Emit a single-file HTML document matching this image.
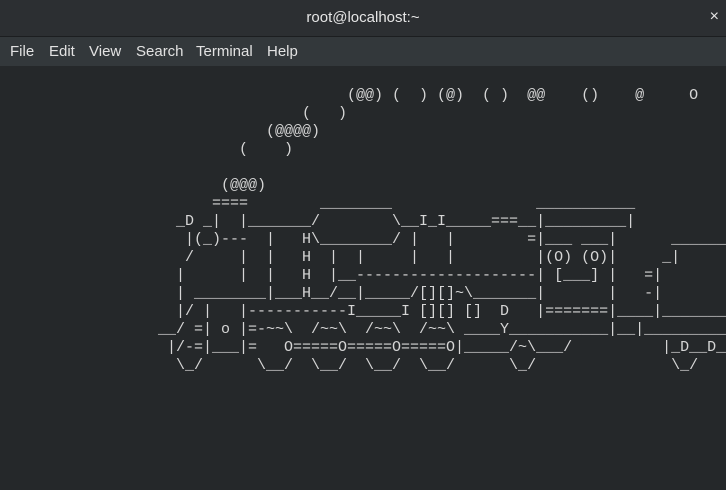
<!DOCTYPE html>
<html><head><meta charset="utf-8"><style>
html,body{margin:0;padding:0;width:726px;height:490px;overflow:hidden;background:#25282a;}
#title{position:absolute;left:0;top:0;width:726px;height:36px;background:#2c2f32;border-bottom:1px solid #1c1e20;color:#e6e6e6;font:15px "Liberation Sans",sans-serif;}
#title .t{position:absolute;left:0;right:0;top:9px;text-align:center;}
#title .x{position:absolute;right:7px;top:8px;font-size:16px;}
#menu{position:absolute;left:0;top:37px;width:726px;height:29px;background:#33383b;color:#e2e2e2;font:15px "Liberation Sans",sans-serif;}
#menu span{position:absolute;top:6px;}
pre{position:absolute;left:140px;top:87px;width:586px;overflow:hidden;margin:0;font:15px/18px "Liberation Mono","DejaVu Sans Mono",monospace;color:#d6d6d6;white-space:pre;letter-spacing:0;}
</style></head><body>
<div id="title"><div class="t">root@localhost:~</div><div class="x">×</div></div>
<div id="menu"><span style="left:10px">File</span><span style="left:49px">Edit</span><span style="left:89px">View</span><span style="left:136px">Search</span><span style="left:196px">Terminal</span><span style="left:267px">Help</span></div>
<pre>                       (@@) (  ) (@)  ( )  @@    ()    @     O
                  (   )
              (@@@@)
           (    )

         (@@@)
        ====        ________                ___________
    _D _|  |_______/        \__I_I_____===__|_________|
     |(_)---  |   H\________/ |   |        =|___ ___|      _________________
     /     |  |   H  |  |     |   |         |(O) (O)|     _|
    |      |  |   H  |__--------------------| [___] |   =|
    | ________|___H__/__|_____/[][]~\_______|       |   -|
    |/ |   |-----------I_____I [][] []  D   |=======|____|________________________|_
  __/ =| o |=-~~\  /~~\  /~~\  /~~\ ____Y___________|__|__________________________|_
   |/-=|___|=   O=====O=====O=====O|_____/~\___/          |_D__D__D_|  |_D__D__D_|
    \_/      \__/  \__/  \__/  \__/      \_/               \_/</pre>
</body></html>
